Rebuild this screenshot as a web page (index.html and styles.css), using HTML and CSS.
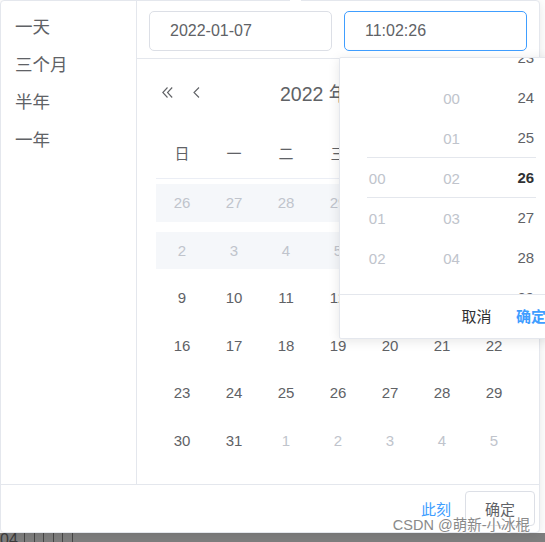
FILE: index.html
```html
<!DOCTYPE html>
<html lang="zh-CN">
  <head>
    <meta charset="UTF-8" />
    <meta name="viewport" content="width=device-width, initial-scale=1.0" />
    <title>日期时间选择</title>
    <link rel="stylesheet" href="styles.css">
  </head>
  <body>
    <div class="picker">
      <span class="picker-arrow"></span>
      <div class="picker-body">
        <div class="sidebar">
          <button class="shortcut">一天</button>
          <button class="shortcut">三个月</button>
          <button class="shortcut">半年</button>
          <button class="shortcut">一年</button>
        </div>
        <div class="picker-main">
          <div class="time-header">
            <div class="input"><span>2022-01-07</span></div>
            <div class="input is-focus"><span>11:02:26</span></div>
          </div>
          <div class="date-panel">
            <div class="date-header">
              <button class="icon-btn">
                <svg width="11" height="11" viewBox="0 0 11 11"><polyline points="5.5,0.5 0.8,5.5 5.5,10.5" /><polyline points="10.2,0.5 5.5,5.5 10.2,10.5" /></svg>
              </button>
              <button class="icon-btn">
                <svg width="7" height="11" viewBox="0 0 7 11"><polyline points="6,0.5 1,5.5 6,10.5" /></svg>
              </button>
              <div class="date-title"><span>2022 年</span><span>1 月</span></div>
              <button class="icon-btn">
                <svg width="7" height="11" viewBox="0 0 7 11"><polyline points="1,0.5 6,5.5 1,10.5" /></svg>
              </button>
              <button class="icon-btn">
                <svg width="11" height="11" viewBox="0 0 11 11"><polyline points="0.8,0.5 5.5,5.5 0.8,10.5" /><polyline points="5.5,0.5 10.2,5.5 5.5,10.5" /></svg>
              </button>
            </div>
            <table class="date-table">
              <tr>
                <th>日</th><th>一</th><th>二</th><th>三</th><th>四</th><th>五</th><th>六</th>
              </tr>
              <tr class="disabled">
                <td><div>26</div></td><td><div>27</div></td><td><div>28</div></td><td><div>29</div></td><td><div>30</div></td><td><div>31</div></td><td><div>1</div></td>
              </tr>
              <tr class="disabled">
                <td><div>2</div></td><td><div>3</div></td><td><div>4</div></td><td><div>5</div></td><td><div>6</div></td><td><div>7</div></td><td><div>8</div></td>
              </tr>
              <tr>
                <td><div>9</div></td><td><div>10</div></td><td><div>11</div></td><td><div>12</div></td><td><div>13</div></td><td><div>14</div></td><td><div>15</div></td>
              </tr>
              <tr>
                <td><div>16</div></td><td><div>17</div></td><td><div>18</div></td><td><div>19</div></td><td><div>20</div></td><td><div>21</div></td><td><div>22</div></td>
              </tr>
              <tr>
                <td><div>23</div></td><td><div>24</div></td><td><div>25</div></td><td><div>26</div></td><td><div>27</div></td><td><div>28</div></td><td><div>29</div></td>
              </tr>
              <tr>
                <td><div>30</div></td><td><div>31</div></td><td class="next"><div>1</div></td><td class="next"><div>2</div></td><td class="next"><div>3</div></td><td class="next"><div>4</div></td><td class="next"><div>5</div></td>
              </tr>
            </table>
          </div>
        </div>
      </div>
      <div class="picker-footer">
        <a class="link-btn">此刻</a>
        <button class="plain-btn">确定</button>
      </div>

      <!-- time dropdown opened from the second input -->
      <div class="time-panel">
        <div class="spinner">
          <ul class="spinner-list hours">
            <li>00</li><li>01</li><li>02</li><li>03</li>
          </ul>
          <ul class="spinner-list minutes">
            <li>00</li><li>01</li><li>02</li><li>03</li><li>04</li><li>05</li>
          </ul>
          <ul class="spinner-list seconds">
            <li>23</li><li>24</li><li>25</li><li class="active">26</li><li>27</li><li>28</li><li>29</li>
          </ul>
          <span class="spinner-band"></span>
        </div>
        <div class="time-footer">
          <button class="time-btn cancel">取消</button>
          <button class="time-btn confirm">确定</button>
        </div>
      </div>
    </div>

    <div class="page-strip">04<span class="strip-bars"></span></div>
    <div class="watermark">CSDN @萌新-小冰棍</div>
  </body>
</html>
```

FILE: styles.css
```css
* {
  margin: 0px;
  padding: 0px;
  box-sizing: border-box;
}
html,
body {
  overflow: hidden;
}
body {
  position: relative;
  width: 545px;
  height: 542px;
  display: flex;
  flex-direction: column;
  background-color: #ffffff;
  font-family: "Liberation Sans", "Noto Sans CJK SC", sans-serif;
  color: #606266;
}
button {
  font-family: inherit;
  background: none;
  border: none;
}

/* outer picker */
.picker {
  position: relative;
  width: 540px;
  height: 533px;
  flex-shrink: 0;
  display: flex;
  flex-direction: column;
  background-color: #ffffff;
  border: 1px solid #e4e7ed;
  border-radius: 4px;
  box-shadow: 0 2px 12px rgba(0, 0, 0, 0.1);
}
.picker-arrow {
  position: absolute;
  top: -1px;
  left: 289px;
  width: 11px;
  height: 2px;
  background-color: #ffffff;
}
.picker-body {
  display: flex;
  flex-direction: row;
  height: 483px;
}

/* shortcuts */
.sidebar {
  width: 136px;
  padding-top: 8px;
  border-right: 1px solid #e4e7ed;
}
.shortcut {
  display: block;
  width: 100%;
  padding-left: 14px;
  text-align: left;
  font-size: 17.5px;
  line-height: 37.5px;
  color: #606266;
}

.picker-main {
  flex: 1;
  display: flex;
  flex-direction: column;
}
.time-header {
  display: flex;
  flex-direction: row;
  gap: 12px;
  height: 58px;
  padding: 10px 12px 0px 12px;
  border-bottom: 1px solid #e4e7ed;
}
.input {
  flex: 1;
  height: 40px;
  padding-left: 20px;
  border: 1px solid #dcdfe6;
  border-radius: 5px;
  font-size: 16px;
  line-height: 38px;
  color: #606266;
}
.is-focus {
  border-color: #409eff;
}

/* month view */
.date-header {
  display: flex;
  flex-direction: row;
  align-items: center;
  height: 37px;
  margin-top: 15px;
  padding: 0px 25px;
}
.icon-btn {
  display: flex;
  align-items: center;
  margin-right: 20px;
}
.icon-btn:nth-last-child(-n + 2) {
  margin-right: 0px;
  margin-left: 20px;
}
.icon-btn svg {
  fill: none;
  stroke: #606266;
  stroke-width: 1.1;
}
.date-title {
  flex: 1;
  text-align: center;
  font-size: 19.5px;
  color: #606266;
}
.date-title span {
  padding: 0px 6px;
}
.date-table {
  width: 364px;
  margin: 18px auto 0px auto;
  table-layout: fixed;
  border-collapse: separate;
  border-spacing: 0px;
  font-size: 15px;
}
.date-table th {
  height: 50px;
  padding: 0px 0px 3px 0px;
  font-weight: 400;
  color: #606266;
  border-bottom: 1px solid #ebeef5;
}
.date-table td {
  height: 47.5px;
  padding: 5px 0px;
  text-align: center;
}
.date-table td div {
  height: 37.5px;
  line-height: 37.5px;
}
.date-table .disabled td div {
  background-color: #f5f7fa;
  color: #c0c4cc;
}
.date-table td.next {
  color: #c0c4cc;
}

.picker-footer {
  flex: 1;
  display: flex;
  flex-direction: row;
  justify-content: flex-end;
  align-items: center;
  padding-right: 4px;
  border-top: 1px solid #e4e7ed;
}
.link-btn {
  margin-right: 14px;
  font-size: 15px;
  color: #409eff;
}
.plain-btn {
  width: 70px;
  height: 35px;
  border: 1px solid #dcdfe6;
  border-radius: 4px;
  font-size: 15px;
  color: #606266;
}

/* time dropdown */
.time-panel {
  position: absolute;
  left: 338px;
  top: 56px;
  width: 225px;
  height: 282px;
  background-color: #ffffff;
  border: 1px solid #e4e7ed;
  border-radius: 2px;
  box-shadow: 0 2px 12px rgba(0, 0, 0, 0.1);
  z-index: 2;
}
.spinner {
  position: relative;
  display: flex;
  flex-direction: row;
  height: 237px;
  border-bottom: 1px solid #e4e7ed;
}
.spinner-list {
  flex: 1;
  list-style: none;
  height: 236px;
  overflow: hidden;
  font-size: 15px;
  text-align: center;
}
.spinner-list li {
  height: 40px;
  line-height: 40px;
}
.hours li,
.minutes li {
  color: #c0c4cc;
}
.hours li:first-child {
  margin-top: 101px;
}
.minutes li:first-child {
  margin-top: 21px;
}
.seconds li:first-child {
  margin-top: -20px;
}
.seconds li {
  color: #606266;
}
.seconds li.active {
  color: #303133;
  font-weight: 700;
}
.spinner-band {
  position: absolute;
  top: 99px;
  left: 12%;
  right: 12%;
  height: 41px;
  border-top: 1px solid #e4e7ed;
  border-bottom: 1px solid #e4e7ed;
  pointer-events: none;
}
.time-footer {
  height: 43px;
  padding-right: 17px;
  text-align: right;
  line-height: 43px;
}
.time-btn {
  font-size: 15px;
  line-height: 43px;
}
.cancel {
  margin-right: 20px;
  color: #303133;
}
.confirm {
  font-weight: 700;
  color: #409eff;
}

/* page behind the picker */
.page-strip {
  flex: 1;
  overflow: hidden;
  background-color: #7f7f7f;
  font-size: 16px;
  line-height: 14px;
  color: #3c3c3c;
  white-space: nowrap;
}
.strip-bars {
  display: inline-block;
  width: 58px;
  height: 12px;
  margin-left: 6px;
  background: repeating-linear-gradient(90deg, #474747 0px, #474747 1px, transparent 1px, transparent 9.6px);
}
.watermark {
  position: absolute;
  right: 15px;
  top: 513px;
  font-size: 14.5px;
  color: #8a8a8a;
  text-shadow: 0 0 2px #ffffff, 0 0 2px #ffffff;
}
```
